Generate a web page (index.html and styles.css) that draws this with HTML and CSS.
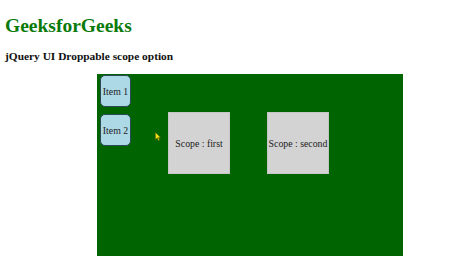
FILE: index.html
```html
<!DOCTYPE html>
<html>
<head>
<meta charset="utf-8">
<link rel="stylesheet" href="styles.css">
</head>
<body>
<h1 class="title">GeeksforGeeks</h1>
<h3 class="subtitle">jQuery UI Droppable scope option</h3>
<div class="stage">
  <div class="items">
    <div class="item">Item 1</div>
    <div class="item">Item 2</div>
  </div>
  <div class="drops">
    <div class="drop">Scope : first</div>
    <div class="drop">Scope : second</div>
  </div>
  <svg class="cursor" width="6" height="9" viewBox="0 0 6 9"><path d="M0.5 0.5 L0.5 7.5 L2.2 5.8 L3.4 8.5 L4.4 8 L3.3 5.4 L5.5 5.4 Z" fill="#f2e21a" stroke="#7a6a00" stroke-width="0.5"/></svg>
</div>
</body>
</html>
```
FILE: styles.css
```css
html, body {
  margin: 0;
  padding: 0;
  background: #ffffff;
}
body {
  padding: 5px;
  font-family: "Liberation Serif", "Times New Roman", serif;
  color: #222;
}
.title {
  margin: 10px 0 0 0;
  font-size: 19.5px;
  line-height: 22px;
  color: #0a7a0a;
  font-weight: bold;
}
.subtitle {
  margin: 13px 0 0 0;
  font-size: 11.4px;
  line-height: 13px;
  font-weight: bold;
  color: #111;
}
.stage {
  position: relative;
  margin: 11px 0 0 92px;
  width: 306px;
  height: 182px;
  background: #006400;
  display: flex;
  align-items: flex-start;
}
.items {
  display: flex;
  flex-direction: column;
  gap: 7px;
  padding: 1px 0 0 3px;
}
.item {
  width: 29px;
  height: 30px;
  border: 1px solid #2a4a55;
  border-radius: 5px;
  background: #add8e6;
  display: flex;
  align-items: center;
  justify-content: center;
  font-size: 9.8px;
  color: #222;
  white-space: nowrap;
}
.drops {
  display: flex;
  gap: 37px;
  margin: 38px 0 0 37px;
}
.drop {
  width: 62px;
  height: 62px;
  background: #d3d3d3;
  border: 1px solid #c6c6c6;
  box-sizing: border-box;
  display: flex;
  align-items: center;
  justify-content: center;
  font-size: 9.8px;
  color: #222;
  white-space: nowrap;
}
.cursor {
  position: absolute;
  left: 58px;
  top: 58px;
}
```
